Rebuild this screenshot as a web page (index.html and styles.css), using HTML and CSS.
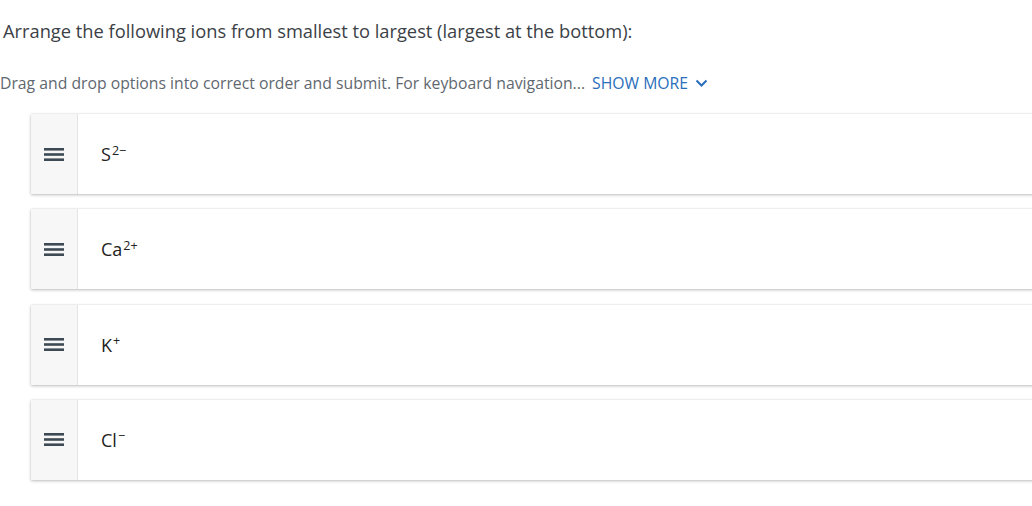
FILE: index.html
```html
<!DOCTYPE html>
<html>
<head>
<meta charset="utf-8">
<link rel="stylesheet" href="styles.css">
</head>
<body>
<div class="page">
  <h1 class="prompt">Arrange the following ions from smallest to largest (largest at the bottom):</h1>
  <p class="instructions">Drag and drop options into correct order and submit. For keyboard navigation... <a class="more">SHOW MORE <svg class="chev" width="13" height="9" viewBox="0 0 13 9"><path d="M1.5 1.5 L6.5 6.5 L11.5 1.5" fill="none" stroke="#2a6ebb" stroke-width="2"/></svg></a></p>
  <ul class="list">
    <li class="item"><span class="handle"><svg width="20" height="13" viewBox="0 0 20 13"><rect x="0" y="0" width="20" height="2.6" fill="#3e4a53"/><rect x="0" y="5.2" width="20" height="2.6" fill="#3e4a53"/><rect x="0" y="10.4" width="20" height="2.6" fill="#3e4a53"/></svg></span><span class="label">S<sup>2−</sup></span></li>
    <li class="item"><span class="handle"><svg width="20" height="13" viewBox="0 0 20 13"><rect x="0" y="0" width="20" height="2.6" fill="#3e4a53"/><rect x="0" y="5.2" width="20" height="2.6" fill="#3e4a53"/><rect x="0" y="10.4" width="20" height="2.6" fill="#3e4a53"/></svg></span><span class="label">Ca<sup>2+</sup></span></li>
    <li class="item"><span class="handle"><svg width="20" height="13" viewBox="0 0 20 13"><rect x="0" y="0" width="20" height="2.6" fill="#3e4a53"/><rect x="0" y="5.2" width="20" height="2.6" fill="#3e4a53"/><rect x="0" y="10.4" width="20" height="2.6" fill="#3e4a53"/></svg></span><span class="label">K<sup>+</sup></span></li>
    <li class="item"><span class="handle"><svg width="20" height="13" viewBox="0 0 20 13"><rect x="0" y="0" width="20" height="2.6" fill="#3e4a53"/><rect x="0" y="5.2" width="20" height="2.6" fill="#3e4a53"/><rect x="0" y="10.4" width="20" height="2.6" fill="#3e4a53"/></svg></span><span class="label">Cl<sup>−</sup></span></li>
  </ul>
</div>
</body>
</html>
```
FILE: styles.css
```css
html, body { margin: 0; padding: 0; background: #fff; }
body { font-family: "Open Sans", Lato, sans-serif; overflow: hidden; width: 1032px; height: 506px; }
.page { padding: 0; }
.prompt {
  margin: 0; padding: 19px 0 0 3px;
  font-size: 18.3px; font-weight: 400; line-height: 24px; color: #3b4146;
}
.instructions {
  margin: 0; padding: 29px 0 0 0;
  font-size: 15.75px; line-height: 22px; color: #5f6870;
  display: flex; align-items: center; white-space: nowrap;
}
.more { color: #2a6ebb; margin-left: 7px; display: inline-flex; align-items: center; gap: 7px; }
.list { list-style: none; margin: 20px 0 0 31px; padding: 0; display: flex; flex-direction: column; gap: 15.3px; }
.item {
  display: flex; height: 80px; width: 1040px; background: #fff;
  box-shadow: 0 1px 3px rgba(0,0,0,0.25), 0 0 1px rgba(0,0,0,0.15);
}
.handle {
  width: 46px; background: #f7f7f7; border-right: 1px solid #e4e4e4;
  display: flex; align-items: center; justify-content: center;
}
.label {
  display: flex; align-items: center; padding-left: 23px;
  font-size: 18px; color: #222;
}
.label sup { font-size: 12.5px; position: relative; top: -4px; vertical-align: baseline; margin-left: 1px; }
```
